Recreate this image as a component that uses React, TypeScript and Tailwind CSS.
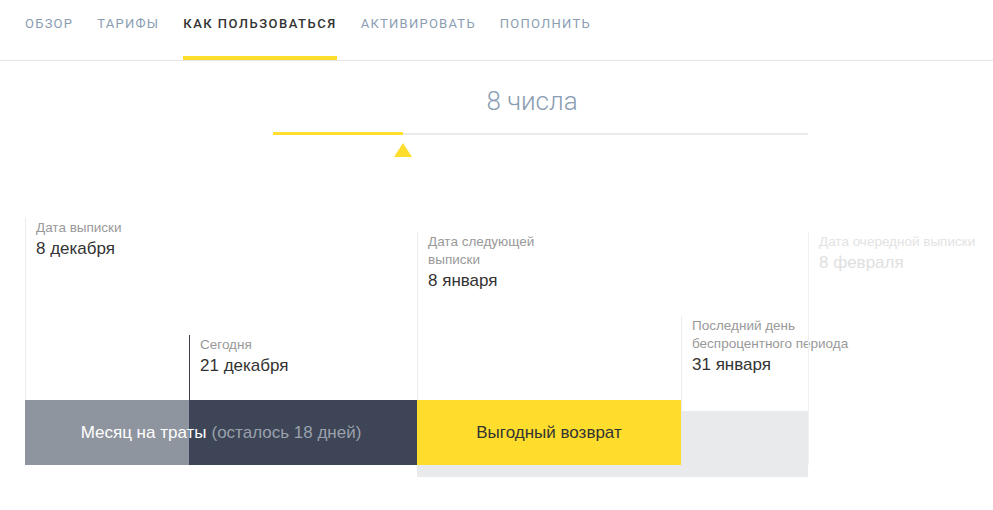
import React from "react";

const navItems = ["Обзор", "Тарифы", "Как пользоваться", "Активировать", "Пополнить"];

function Marker({
  label,
  value,
  faded,
}: {
  label: React.ReactNode;
  value: string;
  faded?: boolean;
}) {
  return (
    <div className="pl-[10px] pt-[1px] whitespace-nowrap">
      <div className={`text-[13.5px] leading-[18px] ${faded ? "text-[#e3e3e3]" : "text-[#999999]"}`}>{label}</div>
      <div className={`text-[17px] leading-[24px] ${faded ? "text-[#e0e0e0]" : "text-[#333333]"}`}>{value}</div>
    </div>
  );
}

export default function App() {
  return (
    <div className="w-[993px] h-[510px] bg-white overflow-hidden font-['Roboto',sans-serif]">
      <nav className="flex gap-[24px] px-[25px] h-[61px] border-b border-[#e6e6e6]">
        {navItems.map((item, i) => (
          <div
            key={item}
            className={`h-[60px] pt-[16px] text-[13px] leading-[16px] uppercase border-b-4 ${
              i === 2
                ? "border-[#ffdd2d] text-[#333333] font-medium tracking-[1.5px]"
                : "border-transparent text-[#8a9db2] tracking-[1.25px]"
            }`}
          >
            {item}
          </div>
        ))}
      </nav>

      <div className="ml-[273px] w-[535px]">
        <div className="mt-[24px] pr-[17px] text-center text-[26px] leading-[32px] font-light text-[#8a9db2]">8 числа</div>
        <div className="mt-[15px] flex items-end h-[3px]">
          <div className="w-[130px] h-[3px] bg-[#ffdd2d]" />
          <div className="flex-1 h-[2px] bg-[#ebebeb]" />
        </div>
        <svg className="ml-[121px] mt-[8px] block" width="18" height="14" viewBox="0 0 18 14">
          <polygon points="9,0 18,14 0,14" fill="#ffdd2d" />
        </svg>
      </div>

      <div className="mt-[61px] ml-[25px] flex items-start font-['Liberation_Sans',Arial,sans-serif]">
        {/* Month for spending */}
        <div className="w-[392px] flex flex-col">
          <div className="h-[182px] flex">
            <div className="w-[164px] h-full border-l border-[#ececec]">
              <Marker label="Дата выписки" value="8 декабря" />
            </div>
            <div className="w-[228px] h-[65px] self-end border-l border-[#3a3f4a]">
              <Marker label="Сегодня" value="21 декабря" />
            </div>
          </div>
          <div className="h-[65px] flex items-center justify-center text-[17px] bg-[linear-gradient(to_right,#8f959f_164px,#3d4556_164px)]">
            <span className="text-white">Месяц на траты</span>
            <span className="text-[#9aa1ac] ml-[5px]">(осталось 18 дней)</span>
          </div>
        </div>

        {/* Grace period */}
        <div className="mt-[14px] w-[391px] flex flex-col">
          <div className="flex items-end">
            <div className="w-[264px] flex flex-col">
              <div className="h-[168px] border-l border-[#ececec]">
                <Marker
                  label={
                    <>
                      Дата следующей
                      <br />
                      выписки
                    </>
                  }
                  value="8 января"
                />
              </div>
              <div className="h-[65px] bg-[#ffdd2d] flex items-center justify-center text-[17px] text-[#333333]">
                Выгодный возврат
              </div>
            </div>
            <div className="w-[127px] flex flex-col">
              <div className="h-[95px] border-l border-[#ececec]">
                <Marker
                  label={
                    <>
                      Последний день
                      <br />
                      беспроцентного периода
                    </>
                  }
                  value="31 января"
                />
              </div>
              <div className="h-[54px] bg-[#e9eaec]" />
            </div>
          </div>
          <div className="h-[12px] bg-[#e9eaec]" />
        </div>

        {/* Next statement */}
        <div className="mt-[14px] h-[233px] border-l border-[#f0f0f0]">
          <Marker label="Дата очередной выписки" value="8 февраля" faded />
        </div>
      </div>
    </div>
  );
}
